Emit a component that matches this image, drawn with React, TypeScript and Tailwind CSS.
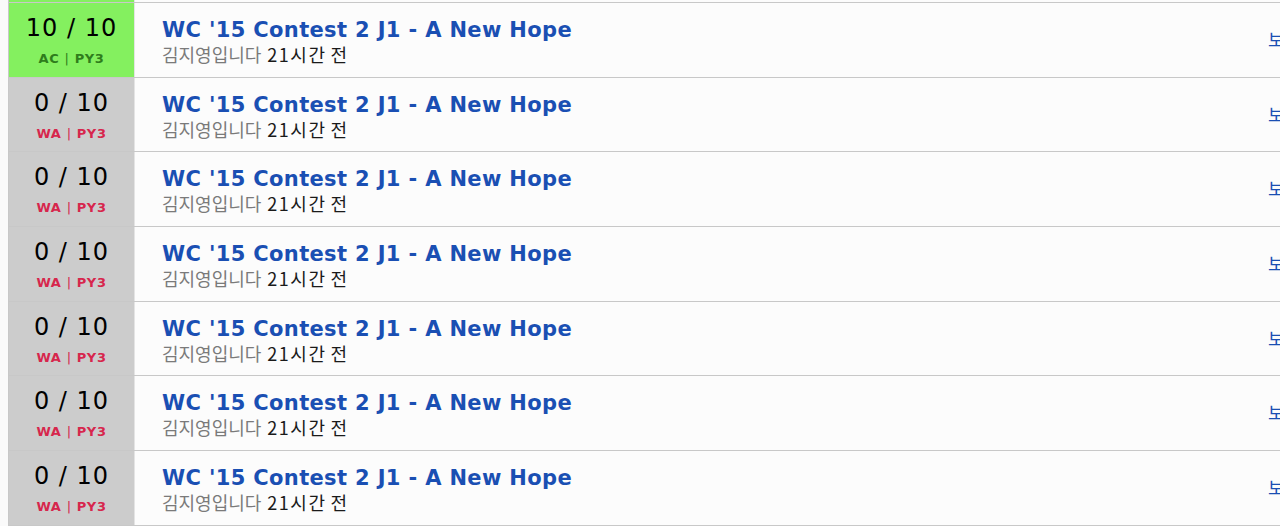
import React from "react";

type Row = { score: string; result: string; ok: boolean };

const rows: Row[] = [
  { score: "10 / 10", result: "AC", ok: true },
  { score: "0 / 10", result: "WA", ok: false },
  { score: "0 / 10", result: "WA", ok: false },
  { score: "0 / 10", result: "WA", ok: false },
  { score: "0 / 10", result: "WA", ok: false },
  { score: "0 / 10", result: "WA", ok: false },
  { score: "0 / 10", result: "WA", ok: false },
];

const font = { fontFamily: '"DejaVu Sans", "Noto Sans CJK KR", sans-serif' };

function SubRow({ row }: { row: Row }) {
  return (
    <div className="flex h-[74.67px] border-b border-[#c8c8c8]">
      <div
        className={`flex w-[126px] shrink-0 flex-col items-center border-r border-[#e4e4e4] pt-[10px] ${
          row.ok ? "bg-[#84f05f]" : "bg-[#cccccc]"
        }`}
      >
        <div className="text-[24px] leading-[30px] tracking-[1px] text-black">{row.score}</div>
        <div
          className={`mt-[8px] text-[13px] font-semibold leading-[16px] tracking-[0.6px] ${
            row.ok ? "text-[#2f7d1c]" : "text-[#d7264c]"
          }`}
        >
          {row.result} <span className="font-normal">|</span> PY3
        </div>
      </div>
      <div className="relative flex min-w-0 flex-1 flex-col bg-[#fcfcfc] pl-[27px] pt-[13px]">
        <a className="text-[21px] font-bold leading-[28px] text-[#1a4fb3] tracking-[0.35px]" href="#">
          WC '15 Contest 2 J1 - A New Hope
        </a>
        <div
          className="-mt-[1px] text-[18px] leading-[22px] text-[#1a1a1a]"
          style={{ fontFamily: '"Noto Sans CJK KR", sans-serif' }}
        >
          <span className="text-[#7a7a7a]">김지영입니다</span>
          <span className="ml-[6px] tracking-[1.5px]">21시간</span>
          <span className="ml-[4px]">전</span>
        </div>
        <div
          className="absolute left-[1133px] top-[24px] whitespace-nowrap text-[18px] leading-[24px] text-[#1a4fb3]"
          style={{ fontFamily: '"Noto Sans CJK KR", sans-serif' }}
        >
          보기
        </div>
      </div>
    </div>
  );
}

export default function App() {
  return (
    <div className="h-[526px] w-[1280px] overflow-hidden bg-[#fafafa]" style={font}>
      <div className="ml-[8px] border-l border-[#c8c8c8]">
        <div className="flex h-[3px] border-b border-[#c8c8c8]">
          <div className="w-[126px] shrink-0 border-r border-[#e4e4e4] bg-[#84f05f]" />
          <div className="flex-1 bg-[#fcfcfc]" />
        </div>
        {rows.map((r, i) => (
          <SubRow key={i} row={r} />
        ))}
      </div>
    </div>
  );
}
